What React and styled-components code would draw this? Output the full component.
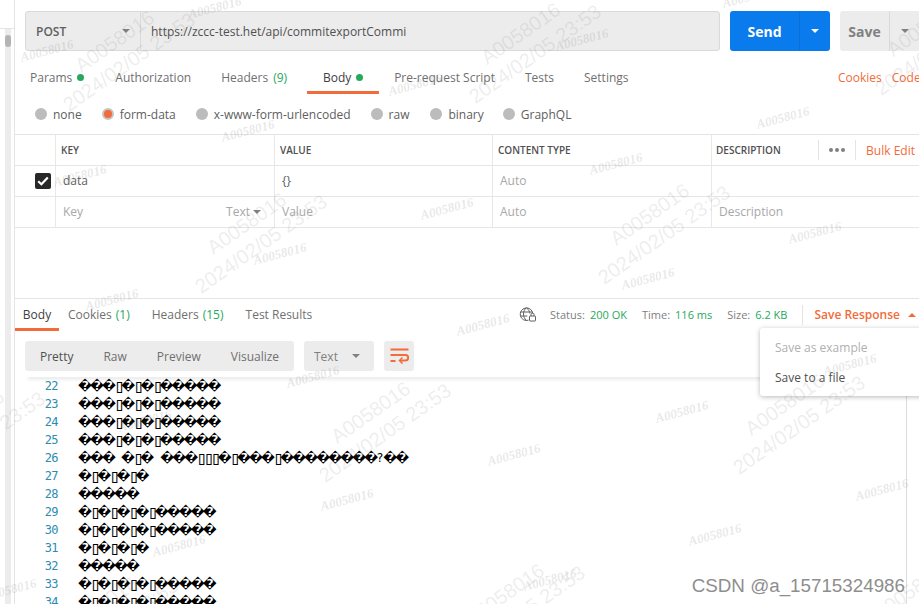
import React from "react";
import styled, { createGlobalStyle } from "styled-components";

const GlobalStyle = createGlobalStyle`
  html, body {
    margin: 0;
    padding: 0;
    background: #fff;
    overflow: hidden;
  }
  body {
    width: 919px;
    height: 604px;
    font-family: "Open Sans", "Liberation Sans", sans-serif;
    font-size: 12px;
    color: #505050;
  }
`;

const orange = "#f26b3a";
const green = "#26a95c";

const BIG_MARKS = [
  [122, 52], [528, 44], [934, 36], [254, 234], [657, 225],
  [-28, 431], [378, 423], [792, 415], [105, 618], [512, 605], [920, 600],
];
const SMALL_MARKS = [
  [47, 51], [215, 8], [749, -3], [582, 40], [415, 85], [248, 131], [80, 176],
  [783, 118], [616, 164], [447, 209], [280, 254], [112, 300],
  [815, 233], [648, 279], [483, 325], [313, 377], [145, 421],
  [850, 365], [682, 412], [514, 455], [347, 500], [179, 546], [10, 590],
  [882, 490], [715, 535], [550, 580],
];

// U = replacement glyph, # = empty box, _ and - = the two blanks in line 26
const CODE_LINES = [
  [22, "UUU#U#U#UUUUU"],
  [23, "UUU#U#U#UUUUU"],
  [24, "UUU#U#U#UUUUU"],
  [25, "UUU#U#U#UUUUU"],
  [26, "UUU_U#U-UUU###U#UUU#UUUUUUUU?UU"],
  [27, "U#U#U#U"],
  [28, "UUUUU"],
  [29, "U#U#U#U#UUUUU"],
  [30, "U#U#U#U#UUUUU"],
  [31, "U#U#U#U"],
  [32, "UUUUU"],
  [33, "U#U#U#U#UUUUU"],
  [34, "U#U#U#U#UUUUU"],
];

const Page = styled.div`
  position: relative;
  width: 919px;
  height: 604px;
  overflow: hidden;
  display: flex;
  background: #fff;
`;

const Sidebar = styled.div`
  width: 15px;
  flex: none;
  box-sizing: border-box;
  border-right: 1px solid #e4e4e4;
  display: flex;
  flex-direction: column;
`;

const SidebarHead = styled.div`
  height: 28px;
  flex: none;
  border-bottom: 1px solid #e4e4e4;
`;

const Track = styled.div`
  flex: 1;
  margin: 0 3px 0 5px;
  background: #ececec;
  padding-top: 6px;
`;

const Thumb = styled.div`
  height: 12px;
  background: #b4b4b4;
  border-radius: 3px;
`;

const Main = styled.div`
  flex: 1;
  min-width: 0;
  display: flex;
  flex-direction: column;
`;

const UrlRow = styled.div`
  height: 40px;
  display: flex;
  margin: 11px 0 0 10px;
  flex: none;
`;

const UrlBox = styled.div`
  width: 695px;
  flex: none;
  box-sizing: border-box;
  display: flex;
  align-items: center;
  background: #ececec;
  border: 1px solid #d9d9d9;
  border-radius: 3px;
`;

const Method = styled.div`
  width: 115px;
  height: 100%;
  box-sizing: border-box;
  display: flex;
  align-items: center;
  justify-content: space-between;
  padding: 0 10px 0 10px;
  border-right: 1px solid #d9d9d9;
  font-weight: 600;
  color: #606060;
`;

const UrlText = styled.div`
  padding-left: 10px;
  font-size: 12px;
  color: #505050;
`;

const Caret = styled.span`
  display: inline-block;
  width: 0;
  height: 0;
  border-left: ${(p) => p.$size || 4}px solid transparent;
  border-right: ${(p) => p.$size || 4}px solid transparent;
  ${(p) => (p.$up ? "border-bottom" : "border-top")}: ${(p) => p.$size || 4}px solid ${(p) => p.$color || "#808080"};
`;

const SplitButton = styled.div`
  height: 40px;
  display: flex;
  align-items: stretch;
  margin-left: ${(p) => p.$gap}px;
  border-radius: 3px;
  background: ${(p) => p.$bg};
  color: ${(p) => p.$color};
  font-size: 14px;
  font-weight: 700;
  flex: none;
`;

const SplitLabel = styled.div`
  width: ${(p) => p.$width}px;
  box-sizing: border-box;
  display: flex;
  align-items: center;
  justify-content: center;
  border-right: 1px solid ${(p) => p.$line};
`;

const SplitArrow = styled.div`
  width: 30px;
  display: flex;
  align-items: center;
  justify-content: center;
`;

const TabRow = styled.div`
  height: 54px;
  flex: none;
  display: flex;
  align-items: flex-start;
  padding: 10px 0 0 15px;
  box-sizing: border-box;
`;

const Tab = styled.div`
  display: flex;
  align-items: center;
  gap: 5px;
  height: 33px;
  padding-top: 2px;
  box-sizing: border-box;
  margin-left: ${(p) => p.$left || 0}px;
  width: ${(p) => (p.$width ? `${p.$width}px` : "auto")};
  justify-content: ${(p) => (p.$width ? "center" : "flex-start")};
  color: ${(p) => (p.$active ? "#404040" : "#707070")};
  white-space: nowrap;
  border-bottom: 3px solid ${(p) => (p.$active ? orange : "transparent")};
`;

const Dot = styled.span`
  width: 7px;
  height: 7px;
  border-radius: 50%;
  background: ${green};
  display: inline-block;
`;

const Count = styled.span`
  color: ${green};
`;

const LinkGroup = styled.div`
  margin-left: auto;
  display: flex;
  gap: 10px;
  color: ${orange};
  height: 33px;
  align-items: center;
  padding: 2px 0 3px;
  box-sizing: border-box;
  white-space: nowrap;
  width: 81px;
`;

const RadioRow = styled.div`
  height: 30px;
  flex: none;
  box-sizing: border-box;
  display: flex;
  align-items: flex-start;
  padding: 1px 0 0 20px;
  border-bottom: 1px solid #e4e4e4;
`;

const RadioItem = styled.div`
  display: flex;
  align-items: center;
  gap: 6px;
  margin-right: ${(p) => p.$gap || 0}px;
  color: #606060;
  height: 16px;
`;

const RadioDot = styled.span`
  box-sizing: border-box;
  width: 12px;
  height: 12px;
  border-radius: 50%;
  background: ${(p) => (p.$on ? orange : "#bcbcbc")};
  border: ${(p) => (p.$on ? "2px solid #c4c4c4" : "0")};
`;

const Grid = styled.div`
  flex: none;
  display: grid;
  grid-template-columns: 41px 219px 218px 219px 1fr;
  grid-auto-rows: 31px;
`;

const Cell = styled.div`
  box-sizing: border-box;
  display: flex;
  align-items: center;
  padding-left: ${(p) => (p.$pad === undefined ? 7 : p.$pad)}px;
  padding-bottom: ${(p) => (p.$head ? 0 : 1)}px;
  border-bottom: 1px solid #e6e6e6;
  border-right: ${(p) => (p.$end ? "0" : "1px solid #e8e8e8")};
  font-size: ${(p) => (p.$head ? "10px" : "12px")};
  font-weight: ${(p) => (p.$head ? 600 : 400)};
  color: ${(p) => (p.$head ? "#505050" : p.$muted ? "#a8a8a8" : "#606060")};
  white-space: nowrap;
  justify-content: ${(p) => (p.$between ? "space-between" : "flex-start")};
`;

const CheckBox = styled.span`
  width: 16px;
  height: 16px;
  margin-left: 20px;
  background: #282828;
  border-radius: 2px;
  display: flex;
  align-items: center;
  justify-content: center;
`;

const HeadTools = styled.div`
  margin-left: auto;
  display: flex;
  align-items: center;
  height: 20px;
  white-space: nowrap;
`;

const MoreDots = styled.span`
  width: 38px;
  height: 20px;
  box-sizing: border-box;
  border-left: 1px solid #e4e4e4;
  border-right: 1px solid #e4e4e4;
  display: flex;
  align-items: center;
  justify-content: center;
  gap: 2px;
  margin-right: 10px;
`;

const MoreDot = styled.i`
  width: 4px;
  height: 4px;
  border-radius: 50%;
  background: #808080;
`;

const BulkEdit = styled.span`
  color: ${orange};
  font-size: 12px;
  font-weight: 400;
  margin-right: 4px;
`;

const InnerType = styled.span`
  display: flex;
  align-items: center;
  gap: 3px;
  color: #a8a8a8;
  padding-right: 13px;
`;

const Spacer = styled.div`
  height: 71px;
  flex: none;
  border-bottom: 1px solid #e4e4e4;
  box-sizing: border-box;
`;

const ResponseTabs = styled.div`
  height: 32px;
  flex: none;
  display: flex;
  align-items: flex-start;
`;

const ResTab = styled.div`
  height: 32px;
  padding-top: 1px;
  box-sizing: border-box;
  display: flex;
  align-items: center;
  gap: 4px;
  width: ${(p) => (p.$width ? `${p.$width}px` : "auto")};
  justify-content: center;
  margin-right: ${(p) => p.$gap || 0}px;
  border-bottom: 3px solid ${(p) => (p.$active ? orange : "transparent")};
  color: ${(p) => (p.$active ? "#404040" : "#707070")};
  white-space: nowrap;
`;

const Meta = styled.div`
  margin-left: auto;
  height: 31px;
  display: flex;
  align-items: center;
  padding-right: 3px;
  font-size: 11px;
  color: #808080;
  white-space: nowrap;
`;

const MetaItem = styled.span`
  display: flex;
  gap: 5px;
  margin-right: 15px;
  color: #808080;
`;

const MetaValue = styled.span`
  color: ${green};
`;

const SaveResponse = styled.span`
  height: 20px;
  display: flex;
  align-items: center;
  gap: 8px;
  border-left: 1px solid #e4e4e4;
  padding-left: 11px;
  color: ${orange};
  font-size: 12px;
  font-weight: 600;
`;

const Toolbar = styled.div`
  height: 46px;
  flex: none;
  box-sizing: border-box;
  display: flex;
  align-items: flex-start;
  margin-left: 10px;
  padding-top: 10px;
  box-shadow: 0 6px 3px -3px rgba(0, 0, 0, 0.07);
`;

const ModeGroup = styled.div`
  width: 269px;
  height: 30px;
  background: #ececec;
  border-radius: 3px;
  display: flex;
  align-items: center;
  box-sizing: border-box;
  padding-left: 15px;
`;

const Mode = styled.span`
  margin-right: ${(p) => p.$gap || 0}px;
  color: ${(p) => (p.$active ? "#505050" : "#707070")};
`;

const FormatSelect = styled.div`
  width: 70px;
  height: 30px;
  margin-left: 10px;
  box-sizing: border-box;
  background: #ececec;
  border-radius: 3px;
  display: flex;
  align-items: center;
  justify-content: space-between;
  padding: 0 14px 0 10px;
  color: #808080;
`;

const WrapButton = styled.div`
  width: 30px;
  height: 30px;
  margin-left: 10px;
  background: #ececec;
  border-radius: 3px;
  display: flex;
  align-items: center;
  justify-content: center;
`;

const CodeArea = styled.div`
  flex: 1;
  min-height: 0;
  overflow: hidden;
`;

const CodeLine = styled.div`
  height: 18px;
  display: flex;
  align-items: center;
`;

const LineNo = styled.span`
  width: 43px;
  text-align: right;
  flex: none;
  color: #2b8bb0;
  font-family: "DejaVu Sans Mono", "Liberation Mono", monospace;
  font-size: 12px;
  letter-spacing: -0.6px;
`;

const CodeText = styled.span`
  margin-left: 20px;
  display: flex;
  color: #000;
`;

const Glyph = styled.span`
  display: inline-block;
  width: ${(p) => p.$w}px;
  height: 18px;
  line-height: 18px;
  text-align: center;
  font-family: ${(p) => (p.$box ? '"DejaVu Sans Mono", monospace' : '"DejaVu Sans", sans-serif')};
  font-size: ${(p) => (p.$box ? (p.$tall ? 18 : 12) : 12.5)}px;
  font-weight: ${(p) => (p.$box ? 400 : 700)};
`;

const RightRule = styled.div`
  position: absolute;
  left: 906px;
  top: 396px;
  bottom: 0;
  width: 1px;
  background: #dcdcdc;
`;

const Menu = styled.div`
  position: absolute;
  left: 760px;
  top: 328px;
  width: 170px;
  height: 68px;
  background: #fff;
  border-radius: 3px;
  box-shadow: 0 1px 5px rgba(0, 0, 0, 0.28);
  padding-top: 4px;
  box-sizing: border-box;
`;

const MenuItem = styled.div`
  height: 30px;
  display: flex;
  align-items: center;
  padding-left: 15px;
  font-size: 12px;
  color: ${(p) => (p.$disabled ? "#b0b0b0" : "#505050")};
`;

const BigMark = styled.div`
  position: absolute;
  transform: translate(-50%, -50%) rotate(-35deg);
  font-family: "Liberation Sans", sans-serif;
  font-size: 20px;
  line-height: 25px;
  text-align: center;
  white-space: nowrap;
  color: rgba(120, 120, 120, 0.14);
  pointer-events: none;
`;

const SmallMark = styled.div`
  position: absolute;
  transform: translate(-50%, -50%) rotate(-15deg);
  font-family: "Liberation Serif", serif;
  font-style: italic;
  font-weight: 700;
  font-size: 13px;
  white-space: nowrap;
  color: rgba(120, 120, 120, 0.18);
  pointer-events: none;
`;

const CsdnMark = styled.div`
  position: absolute;
  right: 14px;
  bottom: 7px;
  font-family: "Liberation Sans", sans-serif;
  font-size: 18.8px;
  color: #8e8e8e;
  white-space: nowrap;
`;

function GlobeLockIcon() {
  return (
    <svg width="17" height="15" viewBox="0 0 17 15" fill="none" stroke="#606060" strokeWidth="1" style={{ marginRight: 14 }}>
      <path d="M9.5 13.2A6.3 6.3 0 1 1 13.8 6.5" />
      <path d="M1.5 5h11.5M1.3 9h7" />
      <path d="M7.2 0.8C3.6 4 3.6 10 7.2 13.2M7.5 0.8C10 2.8 10.8 5 10.8 6.5" />
      <rect x="10.5" y="9" width="6" height="5" rx="0.5" />
      <path d="M12 9V7.6a1.5 1.5 0 0 1 3 0V9" />
    </svg>
  );
}

function WrapIcon() {
  return (
    <svg width="19" height="16" viewBox="0 0 19 16" fill="none" stroke={orange} strokeWidth="2">
      <path d="M0.5 1.5h18M0.5 7h15a2.7 2.7 0 0 1 0 5.4H10M0.5 13h5" />
      <path d="M12.5 9.5L9.5 12.5l3 3" strokeWidth="1.5" />
    </svg>
  );
}

function CheckMark() {
  return (
    <svg width="12" height="10" viewBox="0 0 12 10" fill="none" stroke="#fff" strokeWidth="2.2">
      <path d="M1.2 5.2l3.2 3L10.8 1.5" />
    </svg>
  );
}

function Code({ text }) {
  return (
    <CodeText>
      {text.split("").map((c, i) => {
        if (c === "U") return <Glyph key={i} $w={12}>{"\uFFFD"}</Glyph>;
        if (c === "#") return <Glyph key={i} $w={7.2} $box $tall>{"\u25AF"}</Glyph>;
        if (c === "_") return <Glyph key={i} $w={7}>{"\u00A0"}</Glyph>;
        if (c === "-") return <Glyph key={i} $w={8}>{"\u00A0"}</Glyph>;
        return <Glyph key={i} $w={7.2} $box>{c}</Glyph>;
      })}
    </CodeText>
  );
}

export default function App() {
  return (
    <>
      <GlobalStyle />
      <Page>
        <Sidebar>
          <SidebarHead />
          <Track>
            <Thumb />
          </Track>
        </Sidebar>
        <Main>
          <UrlRow>
            <UrlBox>
              <Method>
                POST
                <Caret />
              </Method>
              <UrlText>https://zccc-test.het/api/commitexportCommi</UrlText>
            </UrlBox>
            <SplitButton $gap={10} $bg="#097bed" $color="#fff">
              <SplitLabel $width={70} $line="#0a6fd6">Send</SplitLabel>
              <SplitArrow>
                <Caret $color="#fff" />
              </SplitArrow>
            </SplitButton>
            <SplitButton $gap={10} $bg="#ececec" $color="#808080">
              <SplitLabel $width={50} $line="#d9d9d9">Save</SplitLabel>
              <SplitArrow>
                <Caret />
              </SplitArrow>
            </SplitButton>
          </UrlRow>

          <TabRow>
            <Tab>
              Params <Dot />
            </Tab>
            <Tab $left={31}>Authorization</Tab>
            <Tab $left={30}>
              Headers <Count>(9)</Count>
            </Tab>
            <Tab $active $width={72} $left={20}>
              Body <Dot />
            </Tab>
            <Tab $left={15}>Pre-request Script</Tab>
            <Tab $left={30}>Tests</Tab>
            <Tab $left={30}>Settings</Tab>
            <LinkGroup>
              <span>Cookies</span>
              <span>Code</span>
            </LinkGroup>
          </TabRow>

          <RadioRow>
            <RadioItem $gap={20}>
              <RadioDot /> none
            </RadioItem>
            <RadioItem $gap={20}>
              <RadioDot $on /> form-data
            </RadioItem>
            <RadioItem $gap={20}>
              <RadioDot /> x-www-form-urlencoded
            </RadioItem>
            <RadioItem $gap={21}>
              <RadioDot /> raw
            </RadioItem>
            <RadioItem $gap={19}>
              <RadioDot /> binary
            </RadioItem>
            <RadioItem>
              <RadioDot /> GraphQL
            </RadioItem>
          </RadioRow>

          <Grid>
            <Cell />
            <Cell $head $pad={5}>KEY</Cell>
            <Cell $head $pad={5}>VALUE</Cell>
            <Cell $head $pad={5}>CONTENT TYPE</Cell>
            <Cell $head $end $pad={4}>
              DESCRIPTION
              <HeadTools>
                <MoreDots>
                  <MoreDot />
                  <MoreDot />
                  <MoreDot />
                </MoreDots>
                <BulkEdit>Bulk Edit</BulkEdit>
              </HeadTools>
            </Cell>

            <Cell $pad={0}>
              <CheckBox>
                <CheckMark />
              </CheckBox>
            </Cell>
            <Cell>data</Cell>
            <Cell>{"{}"}</Cell>
            <Cell $muted>Auto</Cell>
            <Cell $end />

            <Cell />
            <Cell $muted $between>
              Key
              <InnerType>
                Text <Caret />
              </InnerType>
            </Cell>
            <Cell $muted>Value</Cell>
            <Cell $muted>Auto</Cell>
            <Cell $end $muted>Description</Cell>
          </Grid>

          <Spacer />

          <ResponseTabs>
            <ResTab $active $width={44} $gap={9}>Body</ResTab>
            <ResTab $gap={22}>
              Cookies <Count>(1)</Count>
            </ResTab>
            <ResTab $gap={22}>
              Headers <Count>(15)</Count>
            </ResTab>
            <ResTab>Test Results</ResTab>
            <Meta>
              <GlobeLockIcon />
              <MetaItem>
                Status: <MetaValue>200 OK</MetaValue>
              </MetaItem>
              <MetaItem>
                Time: <MetaValue>116 ms</MetaValue>
              </MetaItem>
              <MetaItem>
                Size: <MetaValue>6.2 KB</MetaValue>
              </MetaItem>
              <SaveResponse>
                Save Response <Caret $up $color={orange} />
              </SaveResponse>
            </Meta>
          </ResponseTabs>

          <Toolbar>
            <ModeGroup>
              <Mode $active $gap={30}>Pretty</Mode>
              <Mode $gap={30}>Raw</Mode>
              <Mode $gap={30}>Preview</Mode>
              <Mode>Visualize</Mode>
            </ModeGroup>
            <FormatSelect>
              Text <Caret />
            </FormatSelect>
            <WrapButton>
              <WrapIcon />
            </WrapButton>
          </Toolbar>

          <CodeArea>
            {CODE_LINES.map(([n, text]) => (
              <CodeLine key={n}>
                <LineNo>{n}</LineNo>
                <Code text={text} />
              </CodeLine>
            ))}
          </CodeArea>
        </Main>

        <RightRule />

        <Menu>
          <MenuItem $disabled>Save as example</MenuItem>
          <MenuItem>Save to a file</MenuItem>
        </Menu>

        {BIG_MARKS.map(([x, y]) => (
          <BigMark key={`${x}-${y}`} style={{ left: x, top: y }}>
            A0058016
            <br />
            2024/02/05 23:53
          </BigMark>
        ))}
        {SMALL_MARKS.map(([x, y]) => (
          <SmallMark key={`${x}-${y}`} style={{ left: x, top: y }}>
            A0058016
          </SmallMark>
        ))}
        <CsdnMark>CSDN @a_15715324986</CsdnMark>
      </Page>
    </>
  );
}
